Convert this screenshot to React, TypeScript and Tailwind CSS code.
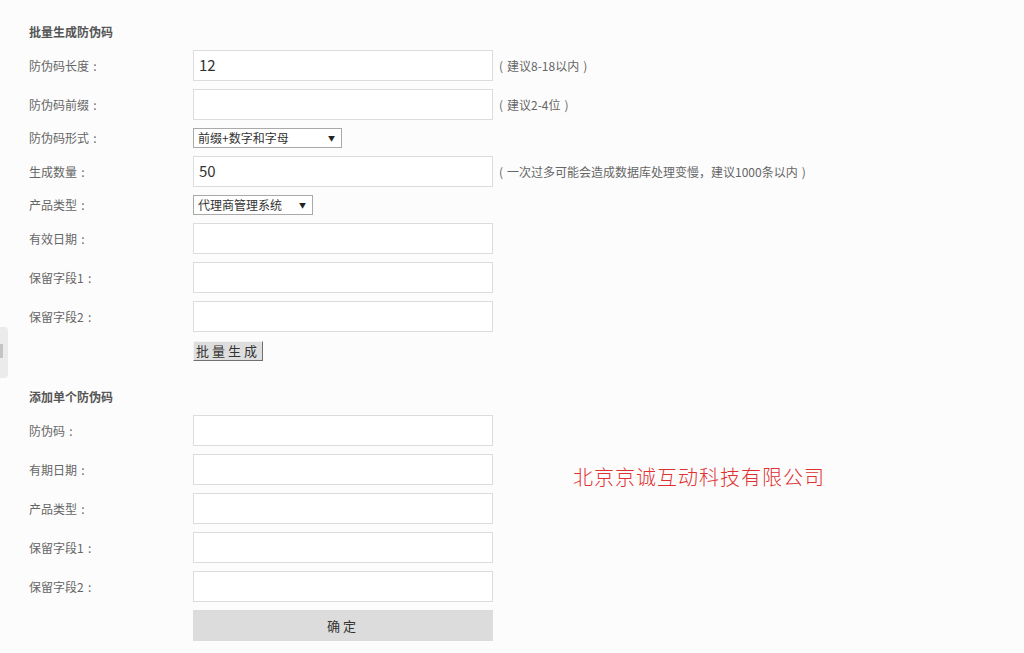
import React from "react";

const font = { fontFamily: '"Noto Sans CJK SC", "Noto Sans", sans-serif' };

// full-width punctuation cell, so the colon and brackets keep their wide spacing
const P = ({ c }: { c: string }) => <span className="inline-block w-[12px] text-center">{c}</span>;

const Row = ({ label, children, hint }: { label: string; children: React.ReactNode; hint?: string }) => (
  <div className="flex items-center">
    <div className="w-[164px] shrink-0 text-[12px] text-[#666]">
      {label}
      <P c=":" />
    </div>
    {children}
    {hint && (
      <div className="ml-[2px] text-[12px] text-[#666]">
        <P c="(" />
        {hint}
        <P c=")" />
      </div>
    )}
  </div>
);

const Input = ({ value }: { value?: string }) => (
  <div className="w-[300px] h-[31px] border border-[#dcdcdc] bg-white px-[5px] flex items-center text-[15px] text-[#333]">
    {value}
  </div>
);

const Select = ({ value, width }: { value: string; width: string }) => (
  <div className={`${width} h-[20px] border border-[#a9a9a9] bg-white flex items-center justify-between pl-[4px] pr-[6px] text-[12px] text-[#333]`}>
    <span>{value}</span>
    <span className="text-[7px] text-[#222]">▼</span>
  </div>
);

export default function App() {
  return (
    <div style={font} className="relative min-h-[653px] bg-[#fcfcfc] pl-[29px] pt-[24px]">
      {/* side toggle */}
      <div className="absolute left-0 top-[327px] w-[8px] h-[51px] bg-[#ebebeb] rounded-r-[4px]">
        <div className="absolute left-0 top-[17px] w-[3px] h-[14px] bg-[#c4c4c4]" />
      </div>

      {/* ================= 批量生成 ================= */}
      <h2 className="h-[16px] leading-[16px] text-[12px] font-bold text-[#555]">批量生成防伪码</h2>
      <div className="mt-[10px] flex flex-col gap-[8px]">
        <Row label="防伪码长度" hint="建议8-18以内">
          <Input value="12" />
        </Row>
        <Row label="防伪码前缀" hint="建议2-4位">
          <Input />
        </Row>
        <Row label="防伪码形式">
          <Select value="前缀+数字和字母" width="w-[149px]" />
        </Row>
        <Row label="生成数量" hint="一次过多可能会造成数据库处理变慢，建议1000条以内">
          <Input value="50" />
        </Row>
        <Row label="产品类型">
          <Select value="代理商管理系统" width="w-[120px]" />
        </Row>
        <Row label="有效日期">
          <Input />
        </Row>
        <Row label="保留字段1">
          <Input />
        </Row>
        <Row label="保留字段2">
          <Input />
        </Row>
        <div className="flex pl-[164px] pt-[1px]">
          <button className="h-[20px] w-[70px] bg-[#dedede] border border-t-[#f4f4f4] border-l-[#f4f4f4] border-r-[#707070] border-b-[#707070] text-[13px] leading-[18px] tracking-[3px] text-[#333]">
            批量生成
          </button>
        </div>
      </div>

      {/* ================= 添加单个 ================= */}
      <div className="mt-[28px] flex">
        <div>
          <h2 className="h-[16px] leading-[16px] text-[12px] font-bold text-[#555]">添加单个防伪码</h2>
          <div className="mt-[10px] flex flex-col gap-[8px]">
            <Row label="防伪码">
              <Input />
            </Row>
            <Row label="有期日期">
              <Input />
            </Row>
            <Row label="产品类型">
              <Input />
            </Row>
            <Row label="保留字段1">
              <Input />
            </Row>
            <Row label="保留字段2">
              <Input />
            </Row>
            <div className="flex pl-[164px]">
              <button className="w-[300px] h-[31px] bg-[#dcdcdc] text-[13px] tracking-[3px] text-[#333]">确定</button>
            </div>
          </div>
        </div>
        <div className="ml-[80px] mt-[75px] text-[20px] font-light tracking-[1px] text-[#e03030] leading-[26px] h-[26px]">
          北京京诚互动科技有限公司
        </div>
      </div>
    </div>
  );
}
